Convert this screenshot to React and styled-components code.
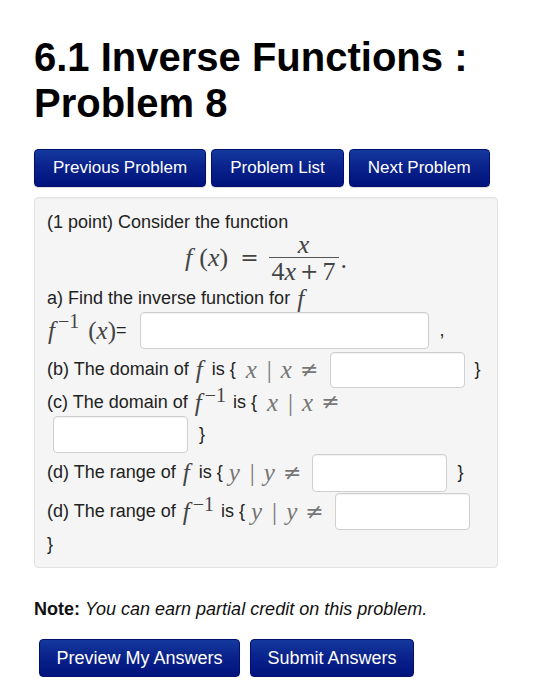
import React from "react";
import styled, { createGlobalStyle } from "styled-components";

const Global = createGlobalStyle`
  html, body { margin: 0; padding: 0; background: #fff; }
  body {
    font-family: "Liberation Sans", Helvetica, Arial, sans-serif;
    color: #222;
    -webkit-font-smoothing: antialiased;
  }
`;

const Page = styled.div`
  width: 534px;
  padding: 34px 0 0 34px;
  box-sizing: border-box;
`;

const Title = styled.h1`
  margin: 0;
  font-size: 40px;
  line-height: 46px;
  font-weight: 700;
  color: #000;
`;

const NavBar = styled.div`
  display: flex;
  gap: 5px;
  margin-top: 23px;
`;

const Button = styled.button`
  height: 38px;
  padding: 0 ${(p) => (p.$big ? 16.5 : 18)}px;
  border: 1px solid #00106e;
  border-radius: 4px;
  background: linear-gradient(to bottom, #143a9e 0%, #0a238c 45%, #00127c 100%);
  color: #fff;
  font-family: "Liberation Sans", Helvetica, Arial, sans-serif;
  font-size: ${(p) => (p.$big ? 18 : 17)}px;
  line-height: 36px;
  white-space: nowrap;
  box-shadow: 0 1px 1px rgba(0, 0, 0, 0.15);
`;

const Panel = styled.div`
  width: 464px;
  box-sizing: border-box;
  margin-top: 10px;
  padding: 12px 12px 10px 12px;
  background: #f5f5f5;
  border: 1px solid #e3e3e3;
  border-radius: 4px;
  box-shadow: inset 0 1px 1px rgba(0, 0, 0, 0.04);
  font-size: 18px;
`;

const Line = styled.div`
  display: flex;
  align-items: center;
  height: ${(p) => p.$h}px;
  white-space: pre;
`;

const M = styled.span`
  font-family: "Liberation Serif", "Times New Roman", serif;
  font-style: ${(p) => (p.$up ? "normal" : "italic")};
  font-size: ${(p) => p.$size || 25}px;
  color: ${(p) => p.$c || "#444"};
  margin: 0 ${(p) => p.$mr || 0}px 0 ${(p) => p.$ml || 0}px;
  line-height: 1;
`;

const Op = styled.span`
  font-family: "DejaVu Serif", serif;
  font-size: ${(p) => p.$size || 22}px;
  color: ${(p) => p.$c || "#444"};
  margin: 0 ${(p) => p.$mr || 0}px 0 ${(p) => p.$ml || 0}px;
  line-height: 1;
`;

const Sup = styled.span`
  font-family: "Liberation Serif", "Times New Roman", serif;
  font-size: 20px;
  color: #444;
  line-height: 1;
  align-self: flex-start;
  margin: ${(p) => p.$top || 0}px ${(p) => p.$mr || 0}px 0 3px;
`;

const FracLeft = styled.span`
  display: flex;
  align-items: center;
  margin: 0 0 5px 138px;
`;

const Frac = styled.span`
  display: inline-flex;
  flex-direction: column;
  align-items: center;
  margin-left: 10px;
`;

const Num = styled.span`
  height: 23px;
  display: flex;
  align-items: center;
`;

const Bar = styled.span`
  align-self: stretch;
  height: 1.5px;
  background: #555;
`;

const Den = styled.span`
  height: 28px;
  display: flex;
  align-items: center;
  padding: 0 3px;
`;

const Input = styled.span`
  display: inline-block;
  box-sizing: border-box;
  width: ${(p) => p.$w}px;
  height: ${(p) => p.$h || 37}px;
  margin-left: ${(p) => p.$ml || 0}px;
  background: #fff;
  border: 1px solid #cfcfcf;
  border-radius: 4px;
  box-shadow: inset 0 1px 1px rgba(0, 0, 0, 0.06);
`;

const Close = styled.span`
  margin-left: ${(p) => p.$ml || 0}px;
`;

const Note = styled.p`
  margin: 30px 0 0 0;
  font-size: 18px;
  line-height: 22px;
  color: #111;
  b { font-weight: 700; }
  i { font-style: italic; }
`;

const Actions = styled.div`
  display: flex;
  gap: 10px;
  margin: 19px 0 0 5px;
`;

const SetMath = ({ v, lead = 10 }) => (
  <>
    <M $c="#777" $ml={lead}>{v}</M>
    <M $c="#777" $up $ml={10} $mr={9}>|</M>
    <M $c="#777">{v}</M>
    <Op $c="#777" $ml={8}>≠</Op>
  </>
);

const F = () => <M $ml={2} $mr={9}>f</M>;

const FInv = ({ top = 0 }) => (
  <>
    <M $ml={2}>f</M>
    <Sup $top={top} $mr={7}>−1</Sup>
  </>
);

export default function App() {
  return (
    <>
      <Global />
      <Page>
        <Title>
          6.1 Inverse Functions :<br />Problem 8
        </Title>
        <NavBar>
          <Button>Previous Problem</Button>
          <Button>Problem List</Button>
          <Button>Next Problem</Button>
        </NavBar>
        <Panel>
          <Line $h={24}>(1 point) Consider the function</Line>
          <Line $h={52}>
            <FracLeft>
              <M $size={26}>f</M>
              <M $size={26} $up $ml={7}>(</M>
              <M $size={26}>x</M>
              <M $size={26} $up>)</M>
              <Op $ml={12}>=</Op>
            </FracLeft>
            <Frac>
              <Num>
                <M $size={26}>x</M>
              </Num>
              <Bar />
              <Den>
                <M $size={26} $up>4</M>
                <M $size={26}>x</M>
                <Op $ml={4} $mr={4}>+</Op>
                <M $size={26} $up>7</M>
              </Den>
            </Frac>
            <M $size={26} $up $ml={2}>.</M>
          </Line>
          <Line $h={24}>
            a) Find the inverse function for <M $ml={2}>f</M>
          </Line>
          <Line $h={41}>
            <M $ml={1}>f</M>
            <Sup $top={1} $mr={9}>−1</Sup>
            <M $up>(</M>
            <M>x</M>
            <M $up>)</M>=
            <Input $w={289} $ml={13} />
            <Close $ml={11}>,</Close>
          </Line>
          <Line $h={37}>
            (b) The domain of <F />is {"{"}
            <SetMath v="x" />
            <Input $w={135} $ml={12} $h={36} />
            <Close $ml={9}>{"}"}</Close>
          </Line>
          <Line $h={28}>
            (c) The domain of <FInv top={-3} />is {"{"}
            <SetMath v="x" />
          </Line>
          <Line $h={37}>
            <Input $w={135} $ml={6} />
            <Close $ml={11}>{"}"}</Close>
          </Line>
          <Line $h={39}>
            (d) The range of <F />is {"{"}
            <SetMath v="y" lead={6} />
            <Input $w={135} $ml={11} $h={38} />
            <Close $ml={10}>{"}"}</Close>
          </Line>
          <Line $h={39}>
            (d) The range of <FInv top={2} />is {"{"}
            <SetMath v="y" lead={6} />
            <Input $w={135} $ml={11} />
          </Line>
          <Line $h={26}>{"}"}</Line>
        </Panel>
        <Note>
          <b>Note:</b> <i>You can earn partial credit on this problem.</i>
        </Note>
        <Actions>
          <Button $big>Preview My Answers</Button>
          <Button $big>Submit Answers</Button>
        </Actions>
      </Page>
    </>
  );
}
